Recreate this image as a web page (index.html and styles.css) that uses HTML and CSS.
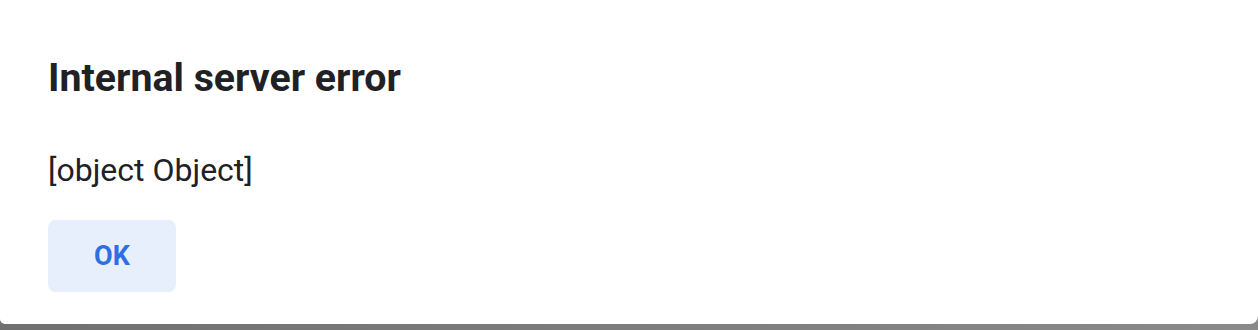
FILE: index.html
```html
<!DOCTYPE html>
<html>
<head>
<meta charset="utf-8">
<link rel="stylesheet" href="styles.css">
</head>
<body>
<div class="dialog">
  <h1 class="title">Internal server error</h1>
  <p class="message">[object Object]</p>
  <div class="actions">
    <button class="btn">OK</button>
  </div>
</div>
</body>
</html>
```
FILE: styles.css
```css
html, body {
  margin: 0;
  padding: 0;
  width: 1258px;
  height: 330px;
  overflow: hidden;
}
body {
  background: linear-gradient(to right, #707070, #8a8a8a);
  font-family: Roboto, "Noto Sans", sans-serif;
}
.dialog {
  box-sizing: border-box;
  width: 1258px;
  height: 324px;
  background: #ffffff;
  border-radius: 0 0 8px 5px;
  padding: 53px 48px 0 48px;
  display: flex;
  flex-direction: column;
}
.title {
  margin: 0;
  font-size: 39.3px;
  font-weight: 700;
  line-height: 50px;
  color: #202124;
}
.message {
  margin: 47px 0 0 0;
  font-size: 32px;
  font-weight: 400;
  line-height: 40px;
  color: #202124;
}
.actions {
  margin-top: 30px;
  display: flex;
}
.btn {
  width: 128px;
  height: 72px;
  border: none;
  border-radius: 8px;
  background: #e8effc;
  color: #2f6fe2;
  font-family: Roboto, "Noto Sans", sans-serif;
  font-size: 27px;
  font-weight: 700;
  padding: 0;
}
```
